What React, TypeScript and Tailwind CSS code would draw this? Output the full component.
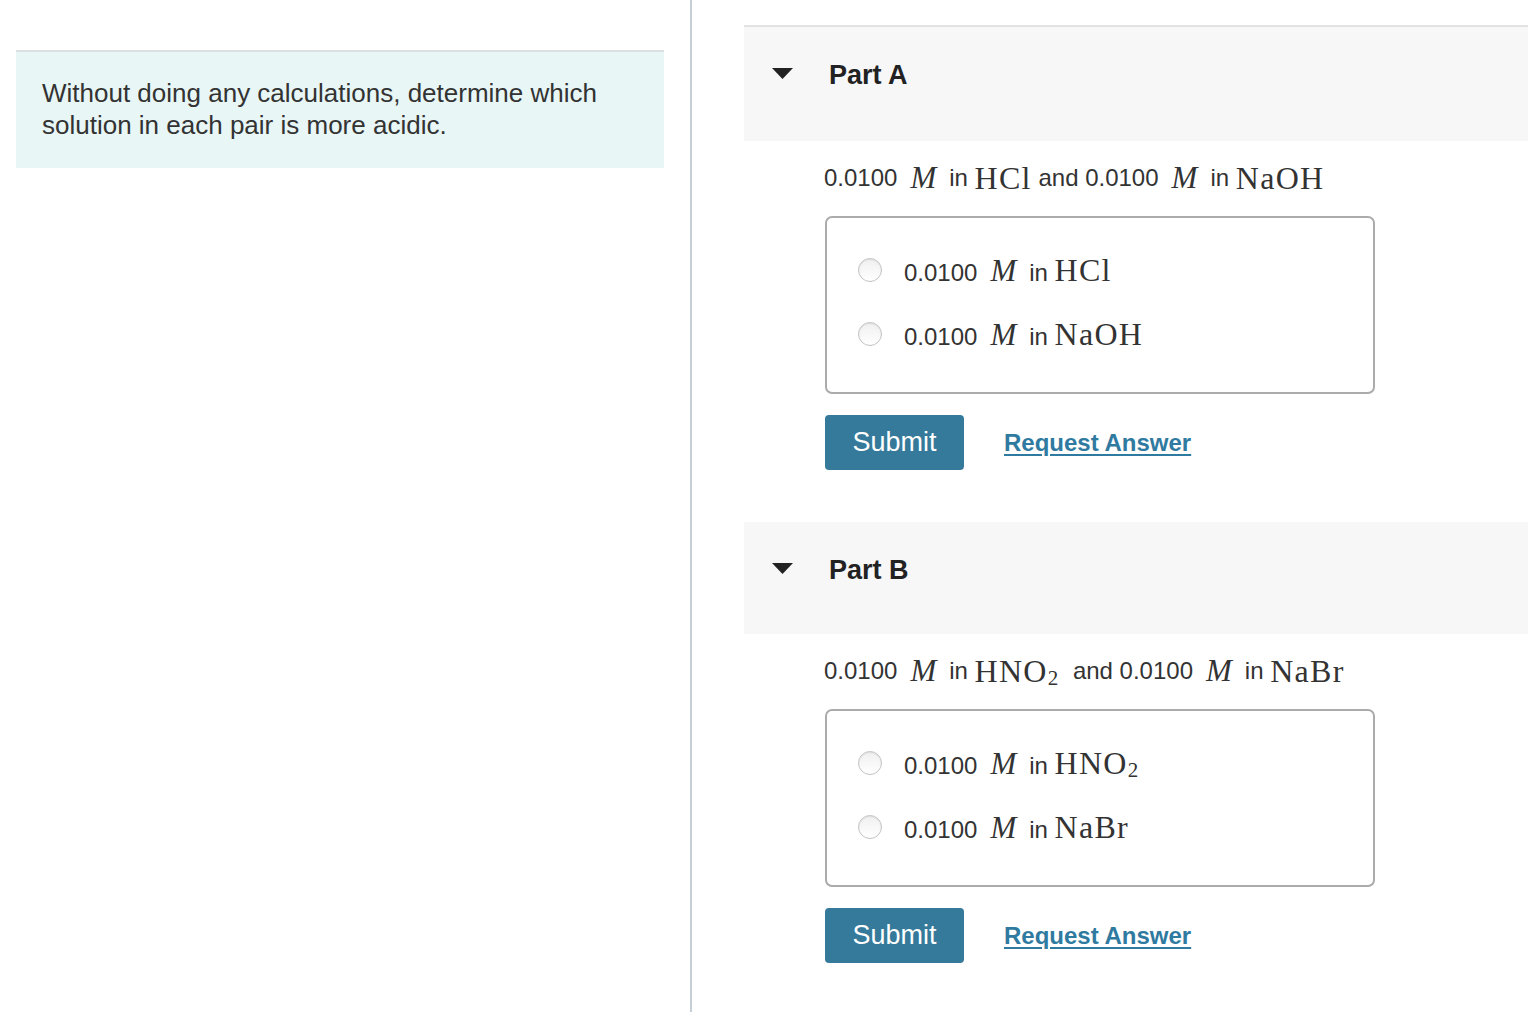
const sans = "font-['Liberation_Sans',Arial,sans-serif]";
const serif = "font-['Liberation_Serif','Times_New_Roman',serif]";

function Chem({ children }: { children: React.ReactNode }) {
  return <span className={`${serif} text-[32px] tracking-[0.04em]`}>{children}</span>;
}

function Molar() {
  return <span className={`${serif} mx-[13px] text-[31px] italic`}>M</span>;
}

function Sub({ children }: { children: React.ReactNode }) {
  return <sub className="relative -bottom-[3px] align-baseline text-[21px]">{children}</sub>;
}

function Triangle() {
  return (
    <svg width="21" height="11" viewBox="0 0 21 11" className="mt-[41px] shrink-0">
      <polygon points="0,0 21,0 10.5,11" fill="#222" />
    </svg>
  );
}

function Radio() {
  return (
    <span className="h-6 w-6 shrink-0 rounded-full border border-[#c4c4c4] bg-gradient-to-b from-[#f0f0f0] to-white shadow-[inset_0_1px_2px_rgba(0,0,0,0.08)]" />
  );
}

function Option({ children }: { children: React.ReactNode }) {
  return (
    <label className="flex h-10 items-center gap-[22px]">
      <Radio />
      <span className="text-[24px] text-[#333]">{children}</span>
    </label>
  );
}

type PartProps = {
  title: string;
  bordered?: boolean;
  question: React.ReactNode;
  options: React.ReactNode[];
};

function Part({ title, bordered, question, options }: PartProps) {
  return (
    <section>
      <div
        className={`flex items-start bg-[#f7f7f7] pl-7 ${
          bordered ? "h-[116px] border-t-2 border-[#e2e2e2]" : "h-[112px]"
        }`}
      >
        <Triangle />
        <h2 className="ml-9 mt-[32px] text-[27px] font-bold leading-[32px] text-[#222]">{title}</h2>
      </div>
      <div className="pl-[81px]">
        <p className="-ml-px mt-[19px] flex h-9 items-center text-[24px] text-[#333]">{question}</p>
        <div className="mt-5 w-[550px] rounded-[7px] border-2 border-[#ababab] pb-[38px] pl-[31px] pt-[32px]">
          <div className="flex flex-col gap-6">
            {options.map((o, i) => (
              <Option key={i}>{o}</Option>
            ))}
          </div>
        </div>
        <div className="mt-[21px] flex items-center gap-10">
          <button className="h-[55px] w-[139px] rounded-[4px] bg-[#367a9b] text-[27px] text-white">
            Submit
          </button>
          <a href="#" className="text-[24px] font-bold text-[#2f7aa0] underline underline-offset-[3px]">
            Request Answer
          </a>
        </div>
      </div>
    </section>
  );
}

export default function App() {
  return (
    <div className={`${sans} flex min-h-[1012px] bg-white text-[#333]`}>
      <div className="w-[692px] shrink-0 border-r-2 border-[#c7cfd6] pl-4 pt-[50px]">
        <div className="w-[648px] border-t-2 border-[#dcdfe1] bg-[#e8f6f6] pb-[27px] pl-[26px] pr-4 pt-[25px] text-[26px] leading-8 text-[#333]">
          Without doing any calculations, determine which solution in each pair is more acidic.
        </div>
      </div>
      <div className="flex-1 pl-[52px] pt-[25px]">
        <Part
          title="Part A"
          bordered
          question={
            <>
              0.0100
              <Molar />
              in&nbsp;
              <Chem>HCl</Chem>
              &nbsp;and 0.0100
              <Molar />
              in&nbsp;
              <Chem>NaOH</Chem>
            </>
          }
          options={[
            <>
              0.0100
              <Molar />
              in&nbsp;
              <Chem>HCl</Chem>
            </>,
            <>
              0.0100
              <Molar />
              in&nbsp;
              <Chem>NaOH</Chem>
            </>,
          ]}
        />
        <div className="h-[52px]" />
        <Part
          title="Part B"
          question={
            <>
              0.0100
              <Molar />
              in&nbsp;
              <Chem>
                HNO<Sub>2</Sub>
              </Chem>
              &nbsp;&nbsp;and 0.0100
              <Molar />
              in&nbsp;
              <Chem>NaBr</Chem>
            </>
          }
          options={[
            <>
              0.0100
              <Molar />
              in&nbsp;
              <Chem>
                HNO<Sub>2</Sub>
              </Chem>
            </>,
            <>
              0.0100
              <Molar />
              in&nbsp;
              <Chem>NaBr</Chem>
            </>,
          ]}
        />
      </div>
    </div>
  );
}
